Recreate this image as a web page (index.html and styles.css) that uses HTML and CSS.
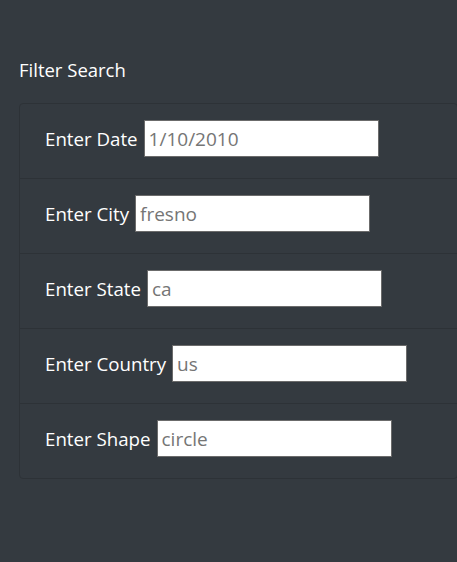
FILE: index.html
```html
<!DOCTYPE html>
<html lang="en">
<head>
<meta charset="utf-8">
<title>Filter Search</title>
<link rel="stylesheet" href="styles.css">
</head>
<body>
<main class="page">
  <h2 class="title">Filter Search</h2>
  <ul class="filters">
    <li class="filter"><label class="filter-label" for="date">Enter Date</label><input class="filter-input" id="date" type="text" placeholder="1/10/2010"></li>
    <li class="filter"><label class="filter-label" for="city">Enter City</label><input class="filter-input" id="city" type="text" placeholder="fresno"></li>
    <li class="filter"><label class="filter-label" for="state">Enter State</label><input class="filter-input" id="state" type="text" placeholder="ca"></li>
    <li class="filter"><label class="filter-label" for="country">Enter Country</label><input class="filter-input" id="country" type="text" placeholder="us"></li>
    <li class="filter"><label class="filter-label" for="shape">Enter Shape</label><input class="filter-input" id="shape" type="text" placeholder="circle"></li>
  </ul>
</main>
</body>
</html>
```
FILE: styles.css
```css
html, body {
  margin: 0;
  padding: 0;
  background: #343a40;
  height: 100%;
}
body {
  font-family: "Open Sans", "Noto Sans", sans-serif;
  color: #ffffff;
  overflow: hidden;
}
.page {
  padding: 55px 0 0 19px;
}
.title {
  margin: 0 0 18px 0;
  font-size: 18.5px;
  font-weight: 400;
  line-height: 30px;
}
.filters {
  list-style: none;
  margin: 0;
  padding: 0;
  width: 437px;
  border: 1px solid #2d3237;
  border-radius: 4px;
}
.filter {
  display: flex;
  align-items: center;
  gap: 6px;
  padding: 16px 25px 21px 25px;
  border-top: 1px solid #2d3237;
}
.filter:first-child {
  border-top: 0;
}
.filter-label {
  font-size: 18.7px;
  line-height: 26px;
}
.filter-input {
  box-sizing: border-box;
  width: 235px;
  height: 37px;
  margin: 0;
  padding: 0 4px;
  border: 1px solid #6b6b6b;
  border-radius: 0;
  background: #ffffff;
  font-family: "Open Sans", "Noto Sans", sans-serif;
  font-size: 19px;
  color: #333;
  outline: none;
}
.filter-input::placeholder {
  color: #757575;
  opacity: 1;
}
```
